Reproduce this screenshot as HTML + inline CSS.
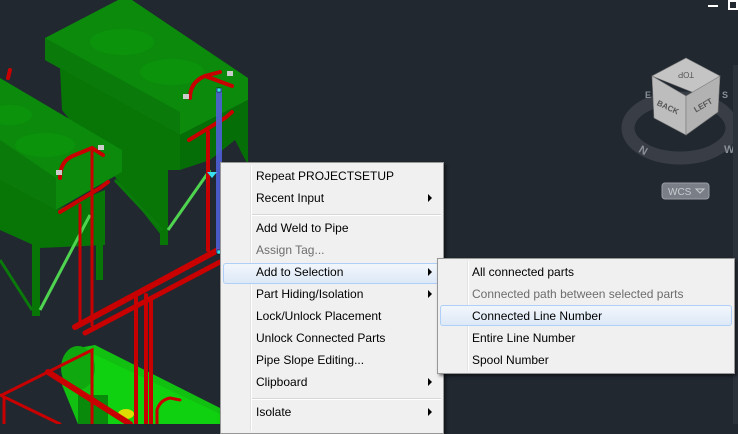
<!DOCTYPE html>
<html><head><meta charset="utf-8"><style>
html,body{margin:0;padding:0}
body{width:738px;height:424px;background:#212830;position:relative;overflow:hidden;font-family:"Liberation Sans",sans-serif}
svg.scene{position:absolute;left:0;top:0}
.menu{position:absolute;background:#f0f0f0;border:1px solid #979797;box-shadow:2px 2px 3px rgba(0,0,0,.5);font-size:12px;color:#000}
.menu .gut{position:absolute;top:2px;bottom:2px;width:1px;background:#e2e3e3;border-right:1px solid #fff}
.it{position:absolute;height:20px;line-height:20px;white-space:nowrap}
.dis{color:#6d6d6d}
.arr{position:absolute;width:0;height:0;border-top:4px solid transparent;border-bottom:4px solid transparent;border-left:4px solid #000}
.hl{position:absolute;border:1px solid #aecff7;border-radius:3px;background:linear-gradient(#f2f6fb,#dde9f7)}
.sep{position:absolute;height:1px;background:#d7d7d7;border-bottom:1px solid #fff}
</style></head><body>
<svg class="scene" width="738" height="424" viewBox="0 0 738 424">
<!-- back big block -->
<polygon points="45,38 118,0 132,0 248,78 248,100 180,135 45,60" fill="#0b8a0b"/>
<polygon points="45,38 180,112 180,135 45,60" fill="#0a7a0a"/>
<polygon points="60,68 180,135 180,170 165,170 165,240 62,110" fill="#077607"/>
<polygon points="180,135 248,100 248,165 235,140 210,160 180,170" fill="#066e06"/>
<ellipse cx="122" cy="42" rx="32" ry="13" fill="#0c930c"/>
<ellipse cx="172" cy="72" rx="32" ry="13" fill="#0c930c"/>
<rect x="160" y="170" width="8" height="75" fill="#077607"/>
<line x1="115" y1="180" x2="162" y2="230" stroke="#0a7a0a" stroke-width="3"/>
<line x1="168" y1="230" x2="210" y2="170" stroke="#4fd44f" stroke-width="3"/>
<!-- front-left block -->
<polygon points="0,78 122,150 122,172 56,210 0,180" fill="#0b8a0b"/>
<polygon points="0,140 56,178 56,210 0,180" fill="#0a7a0a"/>
<polygon points="0,180 56,210 105,190 105,245 40,248 0,230" fill="#077607"/>
<ellipse cx="45" cy="145" rx="30" ry="12" fill="#0c930c"/>
<ellipse cx="10" cy="115" rx="22" ry="10" fill="#0c930c"/>
<rect x="32" y="244" width="8" height="72" fill="#077607"/>
<rect x="96" y="205" width="7" height="75" fill="#077607"/>
<line x1="0" y1="260" x2="32" y2="310" stroke="#0a7a0a" stroke-width="3"/>
<line x1="40" y1="310" x2="90" y2="215" stroke="#4fd44f" stroke-width="3"/>
<!-- green cylinder -->
<polygon points="78,348 95,345 220,408 220,424 78,424 62,385" fill="#12c012"/>
<polygon points="85,350 220,414 220,424 100,424" fill="#0edc0e" opacity=".6"/>
<ellipse cx="78" cy="368" rx="17" ry="22" fill="#0fa80f"/>
<rect x="78" y="395" width="30" height="29" fill="#0a8a0a"/>
<ellipse cx="126" cy="414" rx="8" ry="5" fill="#dddd00"/>
<!-- red pipes -->
<g stroke="#c80000" fill="none" stroke-linecap="round">
<path d="M190,98 Q190,82 205,76 L220,72 M205,76 L232,86" stroke-width="4"/>
<path d="M189,140 L225,118 L232,112" stroke-width="4"/>
<path d="M60,178 Q60,160 75,155 L92,148 L103,155" stroke-width="4"/>
<path d="M60,212 L100,188 L108,182" stroke-width="4"/>
<path d="M92,152 L92,325" stroke-width="3"/>
<path d="M80,205 L80,325" stroke-width="3"/>
<path d="M208,132 L208,250" stroke-width="4"/>
<path d="M75,327 L218,250" stroke-width="6"/>
<path d="M85,333 L220,262" stroke-width="5"/>
<path d="M136,295 L136,424 M146,295 L146,424 M151,300 L151,424" stroke-width="4"/>
<path d="M2,395 L48,372 L92,350 L92,424" stroke-width="3"/>
<path d="M48,372 L130,424" stroke-width="6"/>
<path d="M0,395 L60,424 M4,398 L4,424" stroke-width="3"/>
<path d="M157,424 L157,410 Q160,400 170,398 L180,400" stroke-width="3"/>
<path d="M10,70 L8,78" stroke-width="4"/>
</g>
<!-- selected blue pipe -->
<rect x="216" y="88" width="6" height="165" fill="#4e5fd8" opacity=".9"/>
<rect x="217" y="88" width="4" height="4" fill="#38e0f0" stroke="#000" stroke-width=".5"/>
<rect x="217" y="250" width="4" height="4" fill="#38e0f0" stroke="#000" stroke-width=".5"/>
<polygon points="207,172 217,172 212,178" fill="#38e0f0"/>
<g fill="#cccccc"><rect x="183" y="94" width="6" height="5"/><rect x="227" y="71" width="6" height="5"/><rect x="56" y="170" width="6" height="5"/><rect x="98" y="145" width="6" height="5"/></g>
<!-- view cube -->
<ellipse cx="680" cy="128" rx="52" ry="30" fill="none" stroke="#393e46" stroke-width="13"/>
<polygon points="686,58 720,76 702,96 652,76" fill="#c4c4c4" stroke="#777" stroke-width=".6"/>
<polygon points="652,76 686,96 686,135 654,118" fill="#bdbdbd" stroke="#777" stroke-width=".6"/>
<polygon points="686,96 720,76 718,112 686,135" fill="#b2b2b2" stroke="#777" stroke-width=".6"/>
<text x="686" y="78" font-size="8" fill="#555" text-anchor="middle" transform="rotate(180 686 75)" font-family="Liberation Sans">TOP</text>
<text x="668" y="110" font-size="8" fill="#555" text-anchor="middle" transform="rotate(25 668 107)" font-family="Liberation Sans" font-weight="bold">BACK</text>
<text x="703" y="108" font-size="8" fill="#555" text-anchor="middle" transform="rotate(-30 703 105)" font-family="Liberation Sans" font-weight="bold">LEFT</text>
<text x="640" y="152" font-size="11" fill="#8a8f96" font-weight="bold" transform="rotate(30 640 148)">N</text>
<text x="724" y="153" font-size="11" fill="#8a8f96" font-weight="bold">W</text>
<text x="645" y="98" font-size="9" fill="#8a8f96" font-weight="bold">E</text>
<text x="722" y="98" font-size="9" fill="#8a8f96" font-weight="bold">S</text>
<rect x="662" y="183" width="47" height="16" rx="3" fill="#7a7f87" stroke="#9a9ea5"/>
<text x="668" y="195" font-size="10" fill="#c8cbd0">WCS</text>
<polygon points="696,189 704,189 700,193" fill="none" stroke="#c8cbd0"/>
<rect x="708" y="5" width="10" height="2" fill="#fff"/>
<rect x="729" y="1" width="8" height="8" fill="none" stroke="#fff" stroke-width="2"/>
<rect x="733" y="65" width="5" height="360" fill="#2c323a"/>
</svg>

<div class="menu" style="left:220px;top:162px;width:222px;height:270px">
<div class="gut" style="left:29px"></div>
<div class="hl" style="left:2px;top:100px;width:218px;height:19px"></div>
<div class="it" style="left:35px;top:3px">Repeat PROJECTSETUP</div>
<div class="it" style="left:35px;top:25px">Recent Input</div><div class="arr" style="left:207px;top:31px"></div>
<div class="sep" style="left:31px;top:51px;width:189px"></div>
<div class="it" style="left:35px;top:55px">Add Weld to Pipe</div>
<div class="it dis" style="left:35px;top:77px">Assign Tag...</div>
<div class="it" style="left:35px;top:99px">Add to Selection</div><div class="arr" style="left:207px;top:105px"></div>
<div class="it" style="left:35px;top:121px">Part Hiding/Isolation</div><div class="arr" style="left:207px;top:127px"></div>
<div class="it" style="left:35px;top:143px">Lock/Unlock Placement</div>
<div class="it" style="left:35px;top:165px">Unlock Connected Parts</div>
<div class="it" style="left:35px;top:187px">Pipe Slope Editing...</div>
<div class="it" style="left:35px;top:209px">Clipboard</div><div class="arr" style="left:207px;top:215px"></div>
<div class="sep" style="left:31px;top:235px;width:189px"></div>
<div class="it" style="left:35px;top:239px">Isolate</div><div class="arr" style="left:207px;top:245px"></div>
</div>

<div class="menu" style="left:437px;top:258px;width:296px;height:114px">
<div class="gut" style="left:29px"></div>
<div class="hl" style="left:2px;top:46px;width:290px;height:19px"></div>
<div class="it" style="left:34px;top:3px">All connected parts</div>
<div class="it dis" style="left:34px;top:25px">Connected path between selected parts</div>
<div class="it" style="left:34px;top:47px">Connected Line Number</div>
<div class="it" style="left:34px;top:69px">Entire Line Number</div>
<div class="it" style="left:34px;top:91px">Spool Number</div>
</div>
</body></html>
